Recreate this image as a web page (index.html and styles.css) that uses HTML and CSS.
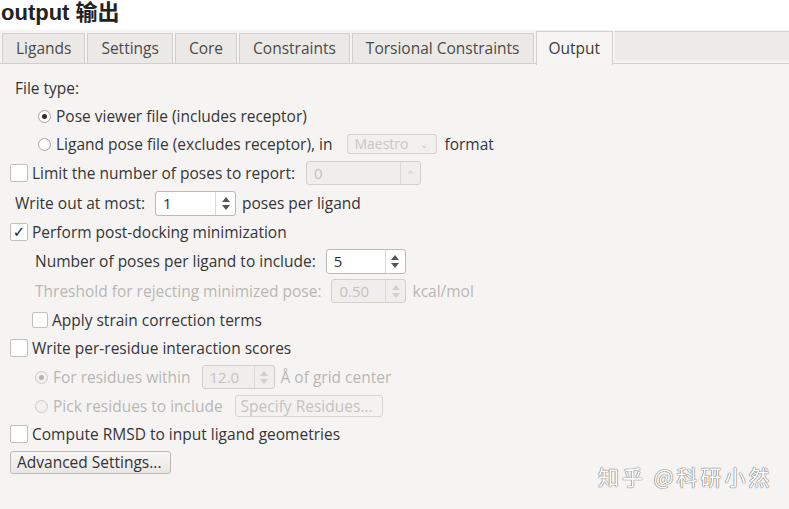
FILE: index.html
```html
<!DOCTYPE html>
<html>
<head>
<meta charset="utf-8">
<link rel="stylesheet" href="styles.css">
</head>
<body>
<h1 class="title">output 输出</h1>
<div class="panel">
  <div class="tabbar">
    <div class="tab">Ligands</div>
    <div class="tab">Settings</div>
    <div class="tab">Core</div>
    <div class="tab">Constraints</div>
    <div class="tab">Torsional Constraints</div>
    <div class="tab active">Output</div>
    <div class="tab-fill"></div>
  </div>
  <div class="content">
    <div class="row"><span class="ind5">File type:</span></div>
    <div class="row"><span class="radio on ind28"></span><span>Pose viewer file (includes receptor)</span></div>
    <div class="row"><span class="radio ind28"></span><span>Ligand pose file (excludes receptor), in</span><span class="combo dis">Maestro<span class="caret">⌄</span></span><span>format</span></div>
    <div class="row tall"><span class="check"></span><span>Limit the number of poses to report:</span><span class="spin dis w115 g11"><span class="val">0</span><span class="arrows"><span>˄</span><span></span></span></span></div>
    <div class="row tall"><span class="ind5">Write out at most:</span><span class="spin w81 g10"><span class="val">1</span><span class="arrows"><span class="up"></span><span class="dn"></span></span></span><span>poses per ligand</span></div>
    <div class="row"><span class="check on">✓</span><span>Perform post-docking minimization</span></div>
    <div class="row tall"><span class="ind25">Number of poses per ligand to include:</span><span class="spin w80 g10"><span class="val">5</span><span class="arrows"><span class="up"></span><span class="dn"></span></span></span></div>
    <div class="row tall dim"><span class="ind25">Threshold for rejecting minimized pose:</span><span class="spin dis w75 g10"><span class="val">0.50</span><span class="arrows"><span class="up"></span><span class="dn"></span></span></span><span>kcal/mol</span></div>
    <div class="row"><span class="check ind22 sm"></span><span>Apply strain correction terms</span></div>
    <div class="row"><span class="check"></span><span>Write per-residue interaction scores</span></div>
    <div class="row tall dim"><span class="radio on ind25"></span><span>For residues within</span><span class="spin dis w73 g11"><span class="val">12.0</span><span class="arrows"><span class="up"></span><span class="dn"></span></span></span><span>Å of grid center</span></div>
    <div class="row dim"><span class="radio ind25"></span><span>Pick residues to include</span><span class="btn dis">Specify Residues...</span></div>
    <div class="row"><span class="check"></span><span>Compute RMSD to input ligand geometries</span></div>
    <div class="row"><span class="btn">Advanced Settings...</span></div>
  </div>
  <div class="watermark">知乎 @科研小然</div>
</div>
</body>
</html>
```
FILE: styles.css
```css
* { box-sizing: border-box; }
html, body { margin: 0; padding: 0; }
body {
  width: 789px;
  height: 509px;
  overflow: hidden;
  background: #ffffff;
  font-family: "Open Sans", "Noto Sans CJK SC", sans-serif;
  color: #363636;
}
.title {
  margin: 0 0 0 1px;
  height: 30px;
  font-family: "Liberation Sans", "Noto Sans CJK SC", sans-serif;
  font-size: 22px;
  line-height: 26px;
  font-weight: bold;
  color: #222;
}
.panel {
  position: relative;
  height: 479px;
  background: #f5f4f2;
  padding-top: 3px;
}
.tabbar {
  display: flex;
  align-items: flex-start;
  height: 31px;
  padding-left: 2px;
  border-bottom: 1px solid #d3d0cc;
}
.tab {
  height: 30px;
  padding: 0 13px;
  margin-right: 2px;
  border: 1px solid #d3d0cc;
  border-bottom: none;
  background: #ebe9e6;
  font-size: 15.5px;
  line-height: 29px;
  color: #4a4a4a;
}
.tab.active {
  margin-top: -2px;
  height: 34px;
  background: #f6f5f3;
  padding: 0 12px;
  line-height: 32px;
  color: #3a3a3a;
}
.tab-fill {
  flex: 1;
  height: 30px;
  margin-top: -2px;
  background: #ecebe8;
  border-top: 1px solid #d6d3cf;
}
.content {
  padding: 10px 0 0 10px;
  font-size: 15.5px;
}
.row {
  display: flex;
  align-items: center;
  height: 28px;
  white-space: nowrap;
}
.row.tall { height: 30px; }
.row.dim { color: #b9b7b4; }
.ind5 { margin-left: 5px; }
.ind22 { margin-left: 22px; }
.ind25 { margin-left: 25px; }
.ind28 { margin-left: 28px; }
.radio {
  width: 13px;
  height: 13px;
  border-radius: 50%;
  border: 1px solid #a9a6a2;
  background: #fff;
  margin-right: 5px;
  display: flex;
  align-items: center;
  justify-content: center;
  flex: none;
}
.radio.on::after {
  content: "";
  width: 5px;
  height: 5px;
  border-radius: 50%;
  background: #2e2e2e;
}
.dim .radio { border-color: #cdcac6; background: #f2f1ef; }
.dim .radio.on::after { background: #b5b3b0; }
.check {
  width: 18px;
  height: 18px;
  border: 1px solid #c2bfbb;
  border-radius: 2px;
  background: #fff;
  margin-right: 4px;
  flex: none;
  display: flex;
  align-items: center;
  justify-content: center;
  font-size: 15px;
  font-weight: bold;
  color: #222;
  font-family: "DejaVu Sans", sans-serif;
}
.check.sm { width: 16px; height: 16px; }
.combo {
  display: inline-flex;
  align-items: center;
  justify-content: space-between;
  width: 90px;
  height: 20px;
  margin: 0 7px 0 15px;
  padding: 0 8px 0 6px;
  border: 1px solid #d6d3cf;
  border-radius: 3px;
  background: #f1f0ee;
  color: #c9c7c4;
  font-size: 14px;
  line-height: 18px;
}
.caret { font-size: 10px; color: #c9c7c4; }
.spin {
  display: inline-flex;
  height: 25px;
  margin: 0 6px 0 10px;
  border: 1px solid #bdbab6;
  border-radius: 3px;
  background: #fff;
  color: #2e2e2e;
}
.g8 { margin-left: 8px; }
.g9 { margin-left: 9px; }
.g10 { margin-left: 10px; }
.g11 { margin-left: 11px; }
.spin.dis {
  background: #efeeec;
  border-color: #d3d0cc;
  color: #c4c2bf;
  height: 24px;
}
.w115 { width: 115px; }
.w81 { width: 81px; }
.w80 { width: 80px; }
.w75 { width: 75px; }
.w73 { width: 73px; }
.val {
  flex: 1;
  padding-left: 7px;
  line-height: 23px;
  font-size: 15px;
}
.arrows {
  width: 20px;
  border-left: 1px solid #dddad6;
  display: flex;
  flex-direction: column;
  align-items: center;
  justify-content: center;
  gap: 3px;
  font-size: 8px;
  line-height: 8px;
  color: #c8c6c3;
}
.up, .dn {
  width: 0;
  height: 0;
  border-left: 4px solid transparent;
  border-right: 4px solid transparent;
}
.up { border-bottom: 5px solid #555; }
.dn { border-top: 5px solid #555; }
.spin.dis .up { border-bottom-color: #d2d0cd; }
.spin.dis .dn { border-top-color: #d2d0cd; }
.btn {
  display: inline-block;
  height: 23px;
  padding: 0 9px 0 6px;
  border: 1px solid #bdbab6;
  border-radius: 3px;
  background: linear-gradient(#f7f6f4, #e9e7e4);
  color: #333;
  font-size: 15.5px;
  line-height: 21px;
}
.btn.dis {
  margin-left: 12px;
  height: 22px;
  width: 148px;
  padding: 0 5px;
  color: #c4c2bf;
  border-color: #d8d5d1;
  background: #f3f2f0;
}
.watermark {
  position: absolute;
  left: 598px;
  top: 431px;
  font-family: "Noto Sans CJK SC", sans-serif;
  font-size: 21px;
  color: #ffffff;
  letter-spacing: 3px;
  text-shadow: 0 0 1px #777, 0 0 1px #777, 0 0 1px #777;
}
```
